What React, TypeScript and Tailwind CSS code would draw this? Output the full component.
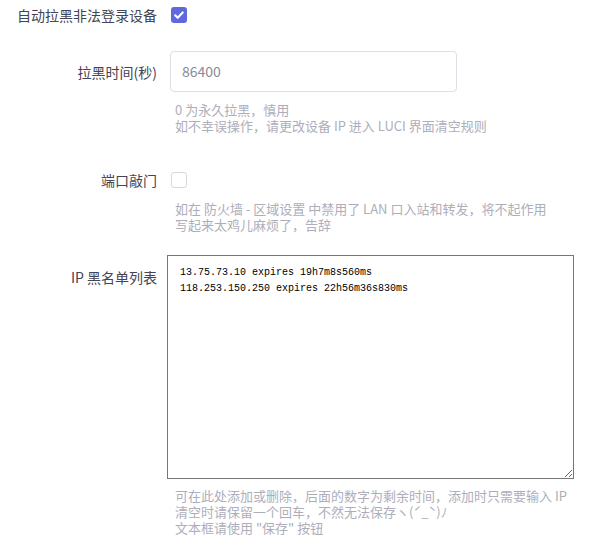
import { FC, ReactNode } from 'react'

const font = { fontFamily: '"Noto Sans CJK SC", "Noto Sans", sans-serif' }

const Row: FC<{ label: string; className?: string; labelClass?: string; children: ReactNode }> = ({
  label,
  className = '',
  labelClass = '',
  children,
}) => (
  <div className={`flex ${className}`}>
    <div className={`w-[157px] shrink-0 text-right text-[14px] leading-4 text-[#444454] ${labelClass}`}>{label}</div>
    {children}
  </div>
)

const Help: FC<{ lines: string[]; className?: string }> = ({ lines, className = '' }) => (
  <div className={`ml-[175px] text-[13px] leading-[15.6px] text-[#aeaebb] ${className}`}>
    {lines.map((l) => (
      <div key={l} className="whitespace-nowrap">
        {l}
      </div>
    ))}
  </div>
)

const CheckIcon = () => (
  <svg viewBox="0 0 16 16" className="h-4 w-4">
    <path d="M4.2 8.3l2.5 2.4 5-5.2" fill="none" stroke="white" strokeWidth="2.2" strokeLinecap="round" strokeLinejoin="round" />
  </svg>
)

export default function App() {
  return (
    <div className="h-[551px] w-[601px] bg-white pt-[7px]" style={font}>
      <Row label="自动拉黑非法登录设备" className="items-center">
        <div className="ml-[14px] flex h-4 w-4 items-center justify-center rounded-[3px] bg-[#5f68dd]">
          <CheckIcon />
        </div>
      </Row>

      <Row label="拉黑时间(秒)" className="mt-[28px] items-center">
        <div className="ml-[13px] flex h-[41px] w-[287px] items-center rounded-[4px] border border-[#dedee6] px-[11px] text-[14px] text-[#8a8a9a]">
          86400
        </div>
      </Row>
      <Help className="mt-[10px] leading-4" lines={['0 为永久拉黑，慎用', '如不幸误操作，请更改设备 IP 进入 LUCI 界面清空规则']} />

      <Row label="端口敲门" className="mt-[39px] items-center">
        <div className="ml-[14px] h-4 w-4 rounded-[3px] border border-[#d6d6de]" />
      </Row>
      <Help className="mt-[13px]" lines={['如在 防火墙 - 区域设置 中禁用了 LAN 口入站和转发，将不起作用', '写起来太鸡儿麻烦了，告辞']} />

      <Row label="IP 黑名单列表" className="mt-[23px]" labelClass="pt-[14px]">
        <textarea
          readOnly
          defaultValue={'13.75.73.10 expires 19h7m8s560ms\n118.253.150.250 expires 22h56m36s830ms'}
          className="ml-[10px] h-[224px] w-[407px] resize border border-[#767676] px-[12px] py-[9px] text-[10px] leading-4 text-black outline-none"
          style={{ fontFamily: '"Liberation Mono", "DejaVu Sans Mono", monospace' }}
        />
      </Row>
      <Help
        className="mt-[9px]"
        lines={['可在此处添加或删除，后面的数字为剩余时间，添加时只需要输入 IP', '清空时请保留一个回车，不然无法保存ヽ(ˊ_ˋ)ﾉ', '文本框请使用 "保存" 按钮']}
      />
    </div>
  )
}
